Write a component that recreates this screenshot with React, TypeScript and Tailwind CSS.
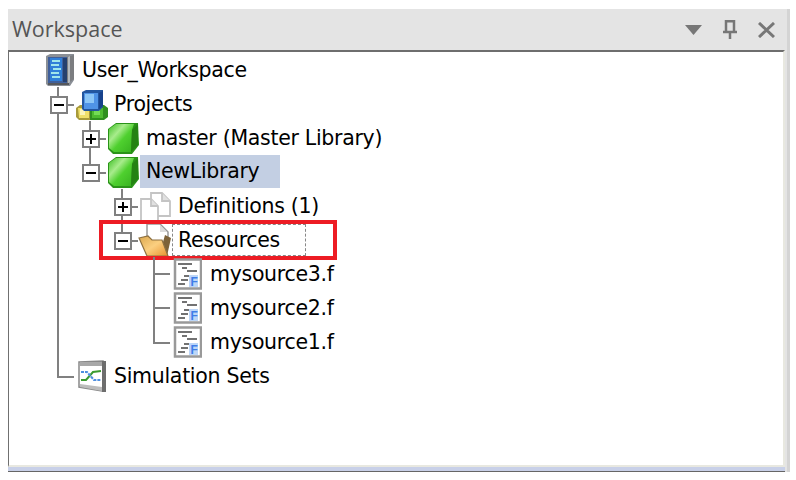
import type { ReactNode } from 'react';

type Cell = 'none' | 'line' | 'tee' | 'corner' | 'plus' | 'minus' | 'minusEnd';

// one 32x34 column of the tree: connector lines and the +/- box
function TreeCell({ kind }: { kind: Cell }) {
    const box = kind === 'plus' || kind === 'minus' || kind === 'minusEnd';
    return (
        <svg width="32" height="34" viewBox="0 0 32 34" className="shrink-0">
            {(kind === 'line' || kind === 'tee') && <path d="M16 0V34" stroke="#808080" strokeWidth="2" />}
            {kind === 'tee' && <path d="M16 17H32" stroke="#808080" strokeWidth="2" />}
            {kind === 'corner' && <path d="M16 0V18H34" stroke="#808080" strokeWidth="2" fill="none" />}
            {box && (
                <>
                    <path d="M16 0V10" stroke="#808080" strokeWidth="2" />
                    {kind !== 'minusEnd' && <path d="M16 25V34" stroke="#808080" strokeWidth="2" />}
                    <path d="M25 18H32" stroke="#808080" strokeWidth="2" />
                    <rect x="9" y="10" width="16" height="16" fill="#fff" stroke="#808080" strokeWidth="2" />
                    <path d="M12 18H22" stroke="#000" strokeWidth="2" />
                    {kind === 'plus' && <path d="M17 13V23" stroke="#000" strokeWidth="2" />}
                </>
            )}
        </svg>
    );
}

function ServerIcon() {
    return (
        <svg width="34" height="34" viewBox="0 0 34 34">
            <path d="M4 3L8 1H32V27L28 33H6L4 31Z" fill="#8a8f96" />
            <path d="M6 4H25V30H6Z" fill="#3f5f9a" />
            <path d="M8 5H20V28H8Z" fill="#2f7fd8" />
            <path d="M10 8H18M9 12H17M11 16H19M9 20H17M10 24H18" stroke="#9fe6ea" strokeWidth="2" />
            <path d="M21 5H25V29H21Z" fill="#25406f" />
            <path d="M25 4L32 2V26L25 31Z" fill="#7b7d80" />
            <path d="M26 4L28 3V29L26 31Z" fill="#b6bbbf" />
            <path d="M6 31H27" stroke="#56585c" strokeWidth="2" />
        </svg>
    );
}

function CubesIcon() {
    return (
        <svg width="34" height="34" viewBox="0 0 34 34">
            <path d="M2 21L6 18H18V33H5L2 30Z" fill="#a89a3a" />
            <path d="M4 21H15V31H5Z" fill="#f0e06a" />
            <path d="M6 22H11V28H6Z" fill="#fbf4b8" />
            <path d="M16 18H30L34 21V30L30 33H16Z" fill="#2f8f1f" />
            <path d="M18 21H29V31H18Z" fill="#4dbb30" />
            <path d="M20 22H26V28H20Z" fill="#74dc55" />
            <path d="M8 5L12 3H29V20L25 24H10L8 22Z" fill="#23569f" />
            <path d="M10 6H24V22H10Z" fill="#4f93e6" />
            <path d="M11 7H20V16H11Z" fill="#8cc6f6" />
            <path d="M25 6L29 4V19L25 22Z" fill="#17428c" />
        </svg>
    );
}

function CubeIcon({ id }: { id: string }) {
    return (
        <svg width="34" height="34" viewBox="0 0 34 34">
            <defs>
                <linearGradient id={id} x1="0" y1="0" x2="1" y2="1">
                    <stop offset="0" stopColor="#3fc026" />
                    <stop offset="0.32" stopColor="#a8ec8c" />
                    <stop offset="0.55" stopColor="#4fd02f" />
                    <stop offset="1" stopColor="#35b01e" />
                </linearGradient>
            </defs>
            <path d="M2 8L10 2H32L33 24L26 33H7L2 28Z" fill="#2a9318" />
            <path d="M3 8L10 3H28L26 9L25 31H8L3 27Z" fill={`url(#${id})`} />
            <path d="M26 9L32 3V24L25 31Z" fill="#248212" />
        </svg>
    );
}

function PageIcon() {
    return (
        <svg width="34" height="34" viewBox="0 0 34 34" fill="#fff" stroke="#c4c4c4" strokeWidth="1.8">
            <path d="M13 4H24L32 12V27H13Z" />
            <path d="M24 4V12H32" fill="#e0e0e0" />
            <path d="M3 10H13L20 17V33H3Z" />
            <path d="M13 10V17H20" fill="#e0e0e0" />
        </svg>
    );
}

function FolderIcon({ id }: { id: string }) {
    return (
        <svg width="34" height="34" viewBox="0 0 34 34">
            <defs>
                <linearGradient id={id} x1="0" y1="0" x2="1" y2="1">
                    <stop offset="0" stopColor="#dba84e" />
                    <stop offset="0.5" stopColor="#fbcf80" />
                    <stop offset="1" stopColor="#e8922f" />
                </linearGradient>
            </defs>
            <path d="M9 1H22L30 9V24H9Z" fill="#fff" stroke="#9a9a9a" strokeWidth="1.5" />
            <path d="M22 2V9H29" fill="#dcdcdc" />
            <path d="M27 12L33 15L29 33L23 26Z" fill="#7d6238" />
            <path d="M1 15L10 13L14 17L24 17L30 33H9Z" fill={`url(#${id})`} stroke="#8d7040" strokeWidth="1.2" />
        </svg>
    );
}

function SourceIcon() {
    return (
        <svg width="30" height="32" viewBox="0 0 30 32">
            <rect x="3" y="1.5" width="26" height="29" fill="#fff" stroke="#999" strokeWidth="2.5" />
            <path d="M6 6H20M10 10H15M15 13H25M12 18H18M9 22H16M6 26H13" stroke="#444" strokeWidth="1.6" />
            <rect x="17" y="17" width="9" height="12" fill="#bcd6f8" />
            <text x="18.5" y="28" fontSize="12" fontWeight="700" fill="#3f7de8" fontFamily="'Liberation Sans', sans-serif">F</text>
        </svg>
    );
}

function SimIcon() {
    return (
        <svg width="30" height="32" viewBox="0 0 30 32">
            <path d="M3 2L27 1V31L3 27Z" fill="#fff" stroke="#888" strokeWidth="1.5" />
            <path d="M26 1H30V32H26Z" fill="#6d6d6d" />
            <path d="M4 2H26V6H4Z" fill="#a8a8a8" />
            <path d="M4 24L26 27V31L4 27Z" fill="#bdbdbd" />
            <path d="M5 20L10 20L17 12L25 11" stroke="#3a9b2f" strokeWidth="2" fill="none" />
            <path d="M5 12L11 12L18 20L25 20" stroke="#4f8fe0" strokeWidth="2" fill="none" strokeDasharray="3 1" />
        </svg>
    );
}

interface RowProps {
    cells: Cell[];
    icon: ReactNode;
    label: string;
    labelClass?: string;
    children?: ReactNode;
}

function Row({ cells, icon, label, labelClass = '', children }: RowProps) {
    return (
        <div className="relative flex h-[34px] items-stretch">
            {cells.map((c, i) => (
                <TreeCell key={i} kind={c} />
            ))}
            <div className="flex w-[34px] shrink-0 items-center justify-center">{icon}</div>
            <div className={`flex items-center px-[6px] leading-none ${labelClass}`}>{label}</div>
            {children}
        </div>
    );
}

export default function App() {
    return (
        <div className="h-[480px] w-[796px] overflow-hidden bg-white pl-2 pt-[9px]">
            <div className="flex w-[782px] flex-col border-r-[3px] border-r-[#d4d4d4] bg-[#e4e4e4]">
                <div className="flex h-[41px] items-center justify-between pl-1 pr-[12px] font-['Open_Sans',sans-serif] text-[21.5px] text-[#555]">
                    <span>Workspace</span>
                    <div className="flex items-center gap-[21px]">
                        <svg width="17" height="10" viewBox="0 0 17 10"><path d="M0 0H17L8.5 10Z" fill="#777" /></svg>
                        <svg width="14" height="19" viewBox="0 0 14 19" fill="none" stroke="#777" strokeWidth="2.5">
                            <path d="M3 0V11M11 0V11M0 12H14M7 12V19M3 1.2H11" />
                        </svg>
                        <svg width="17" height="16" viewBox="0 0 17 16" stroke="#777" strokeWidth="3"><path d="M1 1L16 15M16 1L1 15" /></svg>
                    </div>
                </div>
                <div className="mr-[2px] h-[417px] border-b-2 border-l border-r-2 border-t-2 border-b-[#e8e8e0] border-l-[#707070] border-r-[#e8e8e0] border-t-[#6e6e6e] bg-white pl-[33px] pt-px font-['DejaVu_Sans',sans-serif] text-[20.5px] tracking-[-0.3px] text-black">
                    <Row cells={[]} icon={<ServerIcon />} label="User_Workspace" />
                    <Row cells={['minus']} icon={<CubesIcon />} label="Projects" />
                    <Row cells={['line', 'plus']} icon={<CubeIcon id="cube-master" />} label="master (Master Library)" />
                    <Row cells={['line', 'minusEnd']} icon={<CubeIcon id="cube-new" />} label="NewLibrary" labelClass="w-[140px] bg-[#c3cfe3] mb-px" />
                    <Row cells={['line', 'none', 'plus']} icon={<PageIcon />} label="Definitions (1)" />
                    <Row
                        cells={['line', 'none', 'minusEnd']}
                        icon={<FolderIcon id="folder-res" />}
                        label="Resources"
                        labelClass="my-px w-[134px] border border-dashed border-[#888] pl-[5px]"
                    >
                        <div className="absolute left-[57px] top-[-3px] h-10 w-[238px] border-4 border-[#ed1c24]" />
                    </Row>
                    <Row cells={['line', 'none', 'none', 'tee']} icon={<SourceIcon />} label="mysource3.f" />
                    <Row cells={['line', 'none', 'none', 'tee']} icon={<SourceIcon />} label="mysource2.f" />
                    <Row cells={['line', 'none', 'none', 'corner']} icon={<SourceIcon />} label="mysource1.f" />
                    <Row cells={['corner']} icon={<SimIcon />} label="Simulation Sets" />
                </div>
                <div className="mr-[2px] h-1 bg-[#c8d0e8]" />
                <div className="mr-[2px] h-px bg-[#666]" />
            </div>
        </div>
    );
}
